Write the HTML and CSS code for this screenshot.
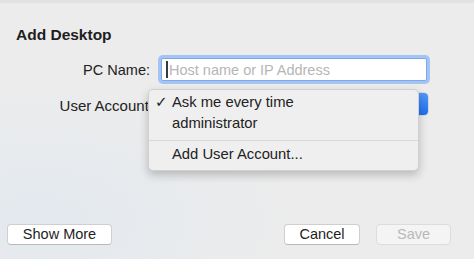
FILE: index.html
```html
<!DOCTYPE html>
<html>
<head>
<meta charset="utf-8">
<link rel="stylesheet" href="styles.css">
</head>
<body>
<div class="window">
  <div class="topbar"></div>
  <div class="content">
    <h1 class="title">Add Desktop</h1>
    <div class="form">
      <label class="label">PC Name:</label>
      <div class="field"><span class="caret"></span><span class="placeholder">Host name or IP Address</span></div>
      <label class="label label-user">User Account:</label>
      <div class="popup"><span class="popup-cap"></span></div>
    </div>
    <div class="footer">
      <button class="btn">Show More</button>
      <div class="footer-right">
        <button class="btn btn-cancel">Cancel</button>
        <button class="btn btn-save">Save</button>
      </div>
    </div>
  </div>
  <div class="menu">
    <div class="item"><span class="check">✓</span>Ask me every time</div>
    <div class="item"><span class="check"></span>administrator</div>
    <div class="sep"></div>
    <div class="item"><span class="check"></span>Add User Account...</div>
  </div>
</div>
</body>
</html>
```
FILE: styles.css
```css
html, body {
  margin: 0;
  padding: 0;
}
body {
  width: 474px;
  height: 259px;
  overflow: hidden;
  font-family: "Liberation Sans", Arial, sans-serif;
  font-size: 14px;
  color: #222;
}
.window {
  position: relative;
  width: 474px;
  height: 259px;
  background: radial-gradient(ellipse 260px 140px at 40px 220px, #e3e9ef 0%, #ececec 100%);
  display: flex;
  flex-direction: column;
}
.topbar {
  height: 3px;
  background: #e2e2e2;
  flex: none;
}
.content {
  flex: 1;
  display: flex;
  flex-direction: column;
  padding: 0 23px 14px 7px;
}
.title {
  margin: 23px 0 0 9px;
  font-size: 15.5px;
  font-weight: bold;
  line-height: 18px;
  color: #1e1e1e;
}
.form {
  display: grid;
  grid-template-columns: 143px 272px;
  column-gap: 8px;
  row-gap: 9px;
  margin-top: 11px;
  align-items: center;
}
.label {
  text-align: right;
  font-size: 14.5px;
  color: #222;
  white-space: nowrap;
}
.label-user {
  position: relative;
  top: 1px;
  left: 3px;
  font-size: 15px;
}
.field {
  margin: 3px;
  height: 21px;
  background: #fff;
  border: 1px solid #7ea9e9;
  box-shadow: 0 0 0 3px #a4c4f1;
  border-radius: 2px;
  display: flex;
  align-items: center;
  padding-left: 4px;
}
.caret {
  width: 2px;
  height: 17px;
  background: #3a3a3a;
  margin-right: 1px;
}
.placeholder {
  color: #b6b6b6;
  font-size: 14.5px;
}
.popup {
  height: 22px;
  width: 270px;
  background: #fff;
  border-radius: 4px;
  display: flex;
  align-items: center;
  justify-content: flex-end;
  box-shadow: 0 0 0 0.5px #c4c4c4;
}
.popup-cap {
  width: 15px;
  height: 22px;
  background: linear-gradient(#4f97f8, #1f6ff0);
  border-radius: 0 4px 4px 0;
}
.footer {
  margin-top: auto;
  display: flex;
  justify-content: space-between;
  align-items: center;
}
.footer-right {
  display: flex;
  gap: 16px;
}
.btn {
  font-family: "Liberation Sans", Arial, sans-serif;
  font-size: 14.5px;
  height: 21px;
  padding: 0;
  background: #fff;
  color: #1e1e1e;
  border: 1px solid #cfcfcf;
  border-bottom-color: #b9b9b9;
  border-radius: 4px;
  line-height: 19px;
  width: 105px;
}
.btn-cancel {
  width: 76px;
}
.btn-save {
  width: 75px;
  background: #f4f4f4;
  color: #b9b9b9;
  border-color: #dcdcdc;
}
.menu {
  position: absolute;
  left: 148px;
  top: 89px;
  width: 269px;
  padding: 2px 0 5px;
  background: #efefef;
  border: 1px solid #d0d0d0;
  border-radius: 5px;
  box-shadow: 0 4px 10px rgba(0, 0, 0, 0.22);
}
.item {
  height: 21px;
  line-height: 21px;
  font-size: 14.8px;
  color: #222;
  display: flex;
  padding-left: 6px;
}
.check {
  width: 17px;
  font-family: "DejaVu Sans", sans-serif;
  font-size: 15px;
  font-weight: bold;
}
.sep {
  height: 1px;
  background: #d8d8d8;
  margin: 6px 0 3px;
}
```
